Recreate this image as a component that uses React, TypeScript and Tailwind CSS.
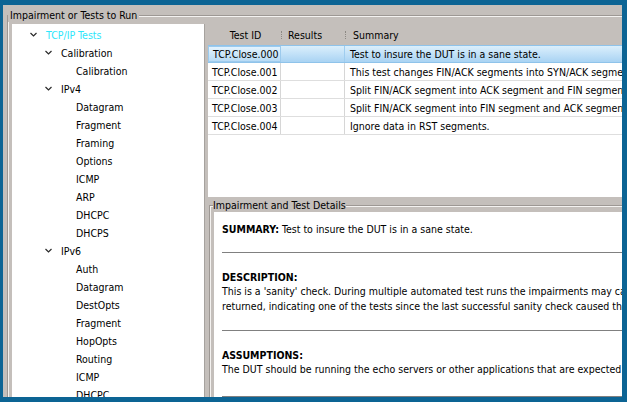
import React from "react";

type Node = { label: string; level: number; open?: boolean; accent?: boolean };

const tree: Node[] = [
  { label: "TCP/IP Tests", level: 0, open: true, accent: true },
  { label: "Calibration", level: 1, open: true },
  { label: "Calibration", level: 2 },
  { label: "IPv4", level: 1, open: true },
  { label: "Datagram", level: 2 },
  { label: "Fragment", level: 2 },
  { label: "Framing", level: 2 },
  { label: "Options", level: 2 },
  { label: "ICMP", level: 2 },
  { label: "ARP", level: 2 },
  { label: "DHCPC", level: 2 },
  { label: "DHCPS", level: 2 },
  { label: "IPv6", level: 1, open: true },
  { label: "Auth", level: 2 },
  { label: "Datagram", level: 2 },
  { label: "DestOpts", level: 2 },
  { label: "Fragment", level: 2 },
  { label: "HopOpts", level: 2 },
  { label: "Routing", level: 2 },
  { label: "ICMP", level: 2 },
  { label: "DHCPC", level: 2 },
];

const rows = [
  ["TCP.Close.000", "", "Test to insure the DUT is in a sane state."],
  ["TCP.Close.001", "", "This test changes FIN/ACK segments into SYN/ACK segments."],
  ["TCP.Close.002", "", "Split FIN/ACK segment into ACK segment and FIN segment."],
  ["TCP.Close.003", "", "Split FIN/ACK segment into FIN segment and ACK segment."],
  ["TCP.Close.004", "", "Ignore data in RST segments."],
];

const indent = ["pl-[16px]", "pl-[31px]", "pl-[46px]"];

function Chevron() {
  return (
    <svg width="18" height="8" viewBox="0 0 18 8">
      <path d="M2.5 2 L5.5 5 L8.5 2" fill="none" stroke="#2a2a2a" strokeWidth="1.2" />
    </svg>
  );
}

function TreeRow({ node }: { node: Node }) {
  return (
    <div className={`flex h-[18px] items-center ${indent[node.level]}`}>
      {node.open ? <Chevron /> : <span className="w-[18px]" />}
      <span className={node.accent ? "text-[#2ee6fb]" : "text-black"}>{node.label}</span>
    </div>
  );
}

function HeaderSep() {
  return <span className="h-[8px] border-l border-dotted border-[#8c8883]" />;
}

export default function App() {
  return (
    <div className="w-[627px] h-[402px] overflow-hidden bg-[#0c6494] pl-[3px] pt-[5px] pr-[5px] pb-[5px] font-['DejaVu_Sans_Condensed','DejaVu_Sans',sans-serif] text-[10.5px] leading-[14px] [font-stretch:condensed]">
      <div className="h-full w-full overflow-hidden bg-[#c4bfbb]">
        <fieldset className="ml-[4px] mt-[3px] w-[720px] h-[520px] border border-[#9d9894] shadow-[inset_1px_1px_0_#f4f2f0] pl-[4px] pt-[2px] pr-0 pb-0 m-0">
          <legend className="-ml-[4px] px-[2px] bg-[#c4bfbb] text-black">Impairment or Tests to Run</legend>
          <div className="flex">
            {/* tree */}
            <div className="w-[193px] h-[480px] shrink-0 bg-white border-r border-[#a6a29e] pt-[2px] overflow-hidden">
              {tree.map((n, i) => (
                <TreeRow key={i} node={n} />
              ))}
            </div>

            {/* right split */}
            <div className="ml-[3px] w-[500px] flex flex-col">
              {/* table */}
              <div className="h-[173px] bg-white overflow-hidden">
                <div className="flex h-[21px] items-center bg-[#c4bfbb] text-black">
                  <div className="w-[73px] text-center pl-[2px]">Test ID</div>
                  <HeaderSep />
                  <div className="w-[63px] pl-[6px]">Results</div>
                  <HeaderSep />
                  <div className="flex-1 pl-[7px]">Summary</div>
                </div>
                {rows.map((r, i) => {
                  const sel = i === 0;
                  return (
                    <div
                      key={i}
                      className={`flex h-[18px] items-center whitespace-nowrap border-b ${
                        sel
                          ? "bg-linear-to-b from-[#dbeffc] to-[#a9d3f3] border-[#8fc3ea] border-t"
                          : "border-[#dedede]"
                      }`}
                    >
                      <div
                        className={`w-[73px] h-full flex items-center pl-[4px] border-r ${
                          sel ? "border border-[#9ccaed] bg-linear-to-b from-[#e4f3fd] to-[#b8dbf5]" : "border-[#d6d6d6]"
                        }`}
                      >
                        {r[0]}
                      </div>
                      <div className={`w-[64px] h-full border-r ${sel ? "border-[#9fcdef]" : "border-[#d6d6d6]"}`}>
                        {r[1]}
                      </div>
                      <div className="flex-1 pl-[5px] overflow-hidden">{r[2]}</div>
                    </div>
                  );
                })}
              </div>

              {/* details */}
              <fieldset className="ml-[1px] mt-px w-[480px] h-[300px] border border-[#9d9894] shadow-[inset_1px_1px_0_#f4f2f0] pl-[4px] pt-0 pr-0 pb-0">
                <legend className="-ml-[1px] px-0 bg-[#c4bfbb] text-black">Impairment and Test Details</legend>
                <div className="h-[260px] bg-white pl-[8px] pt-[10px] leading-[15px] text-black whitespace-nowrap overflow-hidden">
                  <div>
                    <b>SUMMARY:</b> Test to insure the DUT is in a sane state.
                  </div>
                  <hr className="mt-[15px] border-t border-[#808080]" />
                  <div className="mt-[18px] leading-[13px] font-bold">DESCRIPTION:</div>
                  <div>
                    This is a 'sanity' check. During multiple automated test runs the impairments may cause the DUT to fail. If it fails an error is
                    <br />
                    returned, indicating one of the tests since the last successful sanity check caused the problem.
                  </div>
                  <hr className="mt-[16px] border-t border-[#808080]" />
                  <div className="mt-[18px] leading-[13px] font-bold">ASSUMPTIONS:</div>
                  <div>The DUT should be running the echo servers or other applications that are expected by the tests.</div>
                  <hr className="mt-[19px] border-t border-[#808080]" />
                </div>
              </fieldset>
            </div>
          </div>
        </fieldset>
      </div>
    </div>
  );
}
